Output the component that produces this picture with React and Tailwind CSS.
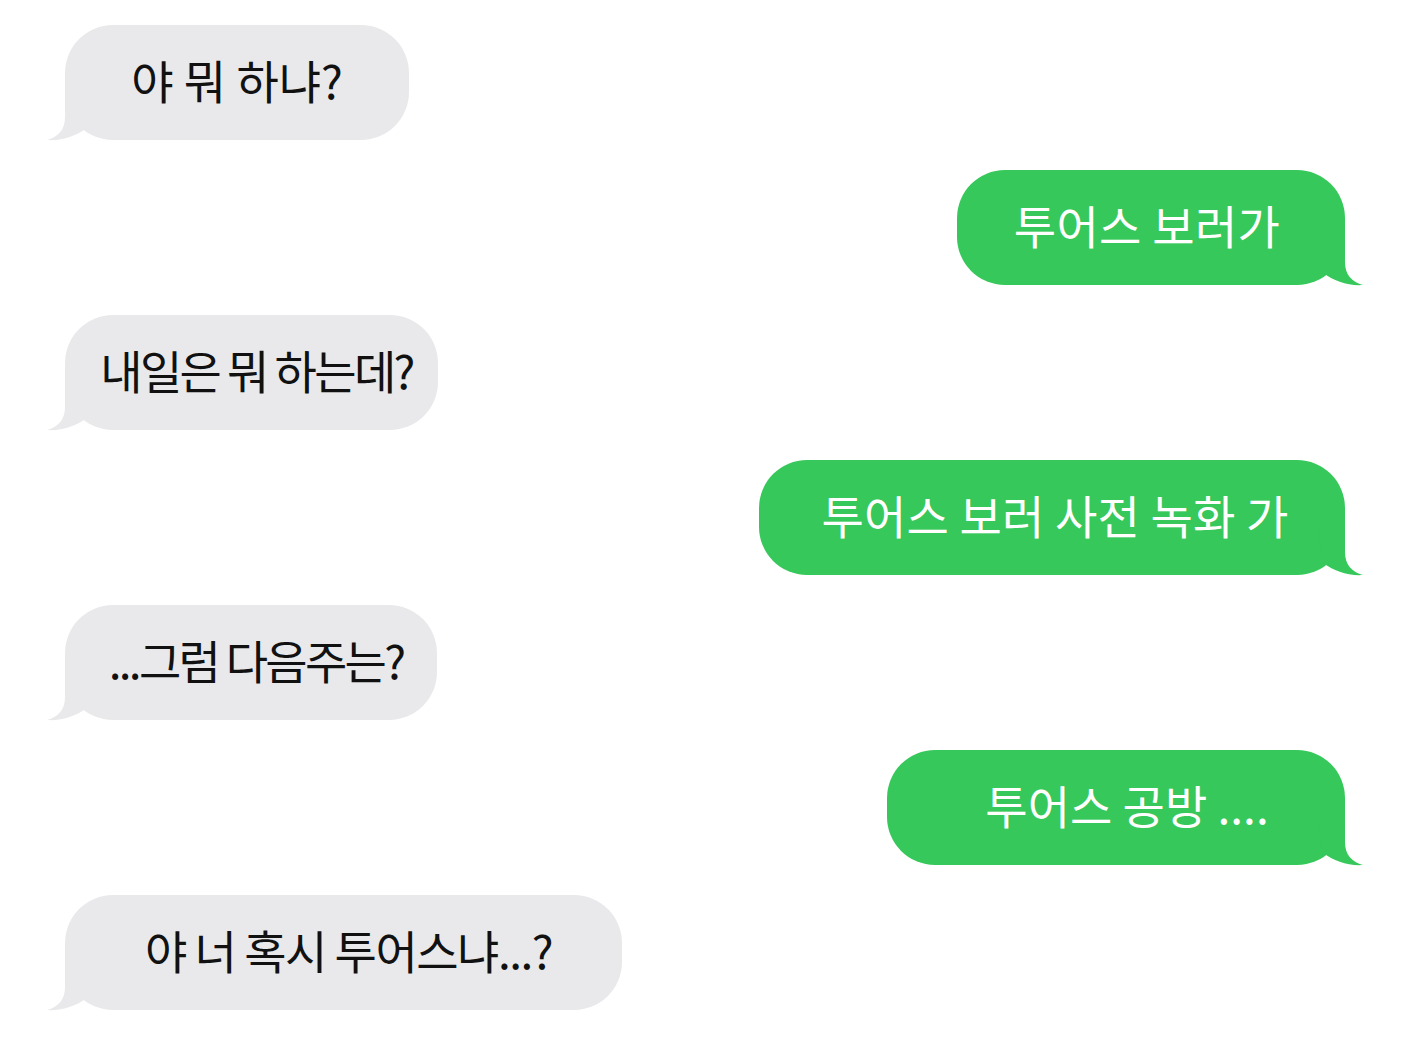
import React from "react";

const messages = [
  { id: 1, mine: false, text: "야 뭐 하냐?", width: "w-[344px]", text_cls: "" },
  { id: 2, mine: true, text: "투어스 보러가", width: "w-[388px]", text_cls: "tracking-[0.3px] mr-[8px]" },
  { id: 3, mine: false, text: "내일은 뭐 하는데?", width: "w-[373px]", text_cls: "tracking-[-2.6px] ml-[10px]" },
  { id: 4, mine: true, text: "투어스 보러 사전 녹화 가", width: "w-[586px]", text_cls: "tracking-[0.2px] ml-[6px]" },
  { id: 5, mine: false, text: "...그럼 다음주는?", width: "w-[372px]", text_cls: "tracking-[-2.7px] ml-[10px]" },
  { id: 6, mine: true, text: "투어스 공방 ....", width: "w-[458px]", text_cls: "ml-[22px]" },
  { id: 7, mine: false, text: "야 너 혹시 투어스냐...?", width: "w-[557px]", text_cls: "tracking-[-1.5px] ml-[10px]" },
];

// bubble tail, drawn for the left side and mirrored for the right
const Tail = ({ mine }) => (
  <svg
    width="46"
    height="48"
    viewBox="0 0 46 48"
    className={`absolute bottom-[-1px] ${
      mine ? "right-[-19px] -scale-x-100 text-[#36c85a]" : "left-[-19px] text-[#e9e9eb]"
    }`}
  >
    <path
      d="M19 0 L19 24 C19 37 12 44 1 47 C16 48 30 43 41 35 L46 0 Z"
      fill="currentColor"
    />
  </svg>
);

const Bubble = ({ msg }) => (
  <div className={`flex ${msg.mine ? "justify-end" : "justify-start"}`}>
    <div
      className={`relative h-[115px] ${msg.width} rounded-[48px] flex items-center justify-center pb-[7px] ${
        msg.mine ? "bg-[#36c85a] text-white" : "bg-[#e9e9eb] text-[#111111]"
      }`}
    >
      <Tail mine={msg.mine} />
      <span className={`relative text-[46px] leading-none whitespace-nowrap ${msg.text_cls}`}>
        {msg.text}
      </span>
    </div>
  </div>
);

export default function App() {
  return (
    <div
      className="w-[1414px] h-[1039px] bg-white pt-[25px] pl-[65px] pr-[69px] flex flex-col gap-[30px] overflow-hidden"
      style={{ fontFamily: '"Noto Sans CJK KR", "Noto Sans", sans-serif' }}
    >
      {messages.map((msg) => (
        <Bubble key={msg.id} msg={msg} />
      ))}
    </div>
  );
}
